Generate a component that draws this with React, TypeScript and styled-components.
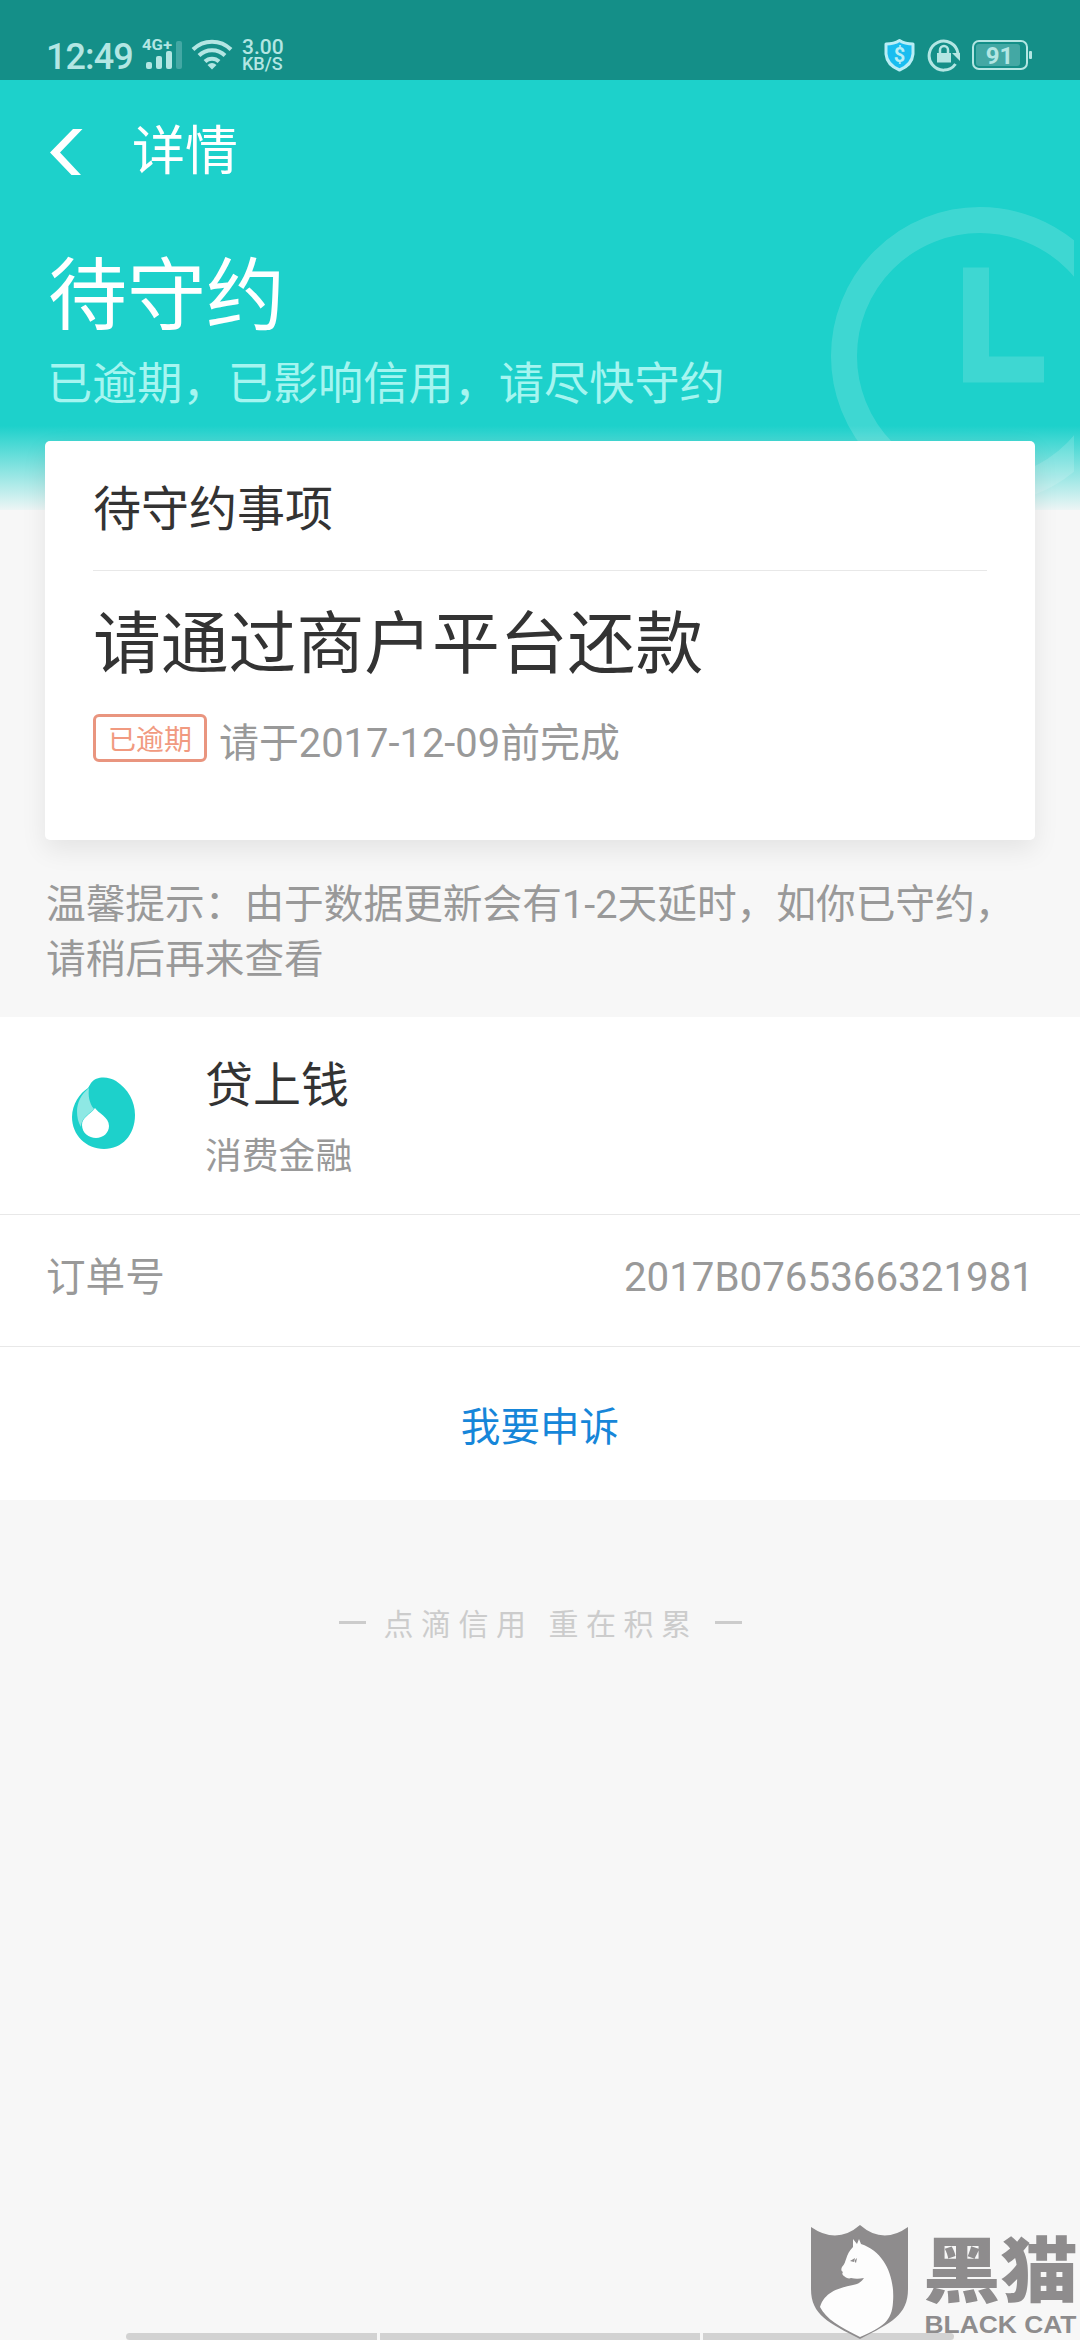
import React from "react";
import styled, { createGlobalStyle } from "styled-components";

const GlobalStyle = createGlobalStyle`
  * { box-sizing: border-box; }
  html, body { margin: 0; padding: 0; background: #f7f7f7; }
  body { font-family: Roboto, "Noto Sans CJK SC", sans-serif; color: #333; }
`;

const Page = styled.div`
  position: relative;
  display: flex;
  flex-direction: column;
  width: 1080px;
  height: 2340px;
  overflow: hidden;
  background: #f7f7f7;
`;

const StatusBar = styled.div`
  display: flex;
  align-items: flex-start;
  height: 80px;
  padding: 36px 47px 0 46px;
  background: #148f88;
  color: #b3e6e3;
`;

const Clock = styled.span`
  width: 95px;
  padding-top: 1px;
  font-size: 36px;
  font-weight: 500;
  letter-spacing: -0.9px;
  line-height: 40px;
  white-space: nowrap;
`;

const NetSpeed = styled.div`
  display: flex;
  flex-direction: column;
  flex: 1;
  margin-left: 9px;
  padding-top: 1px;
  font-weight: 500;
  white-space: nowrap;
`;

const SpeedValue = styled.span`
  font-size: 21px;
  line-height: 20px;
`;

const SpeedUnit = styled.span`
  font-size: 18px;
  line-height: 14px;
`;

const StatusIcons = styled.div`
  display: flex;
  align-items: flex-start;
  gap: 12px;
  padding-top: 2px;
`;

const Hero = styled.header`
  position: relative;
  display: flex;
  flex-direction: column;
  height: 430px;
  background: linear-gradient(#1dd1cb 0, #1dd1cb 346px, #f7f7f7 434px);
`;

const ClockMark = styled.svg`
  position: absolute;
  left: 831px;
  top: 127px;
`;

const NavBar = styled.nav`
  display: flex;
  align-items: center;
  gap: 48px;
  height: 144px;
  padding-left: 50px;
`;

const NavTitle = styled.h1`
  margin: 0;
  color: #fff;
  font-size: 53px;
  font-weight: 400;
  line-height: 60px;
`;

const StatusTitle = styled.h2`
  margin: 18px 0 0 48px;
  color: #fff;
  font-size: 79px;
  font-weight: 400;
  line-height: 110px;
`;

const StatusNote = styled.p`
  margin: 3px 0 0 47px;
  color: #a5f5f0;
  font-size: 45.2px;
  line-height: 60px;
`;

const Card = styled.section`
  position: relative;
  display: flex;
  flex-direction: column;
  width: 990px;
  height: 399px;
  margin: -69px 45px 0;
  padding: 0 48px;
  border-radius: 5px;
  background: #fff;
  box-shadow: 0 10px 26px rgba(0, 0, 0, 0.08);
`;

const CardHeading = styled.h3`
  height: 130px;
  margin: 0;
  padding-top: 39px;
  border-bottom: 1px solid #e8e8e8;
  font-size: 48px;
  font-weight: 400;
  line-height: 60px;
`;

const CardTitle = styled.p`
  margin: 34px 0 0;
  font-size: 67.8px;
  line-height: 80px;
`;

const DueRow = styled.div`
  display: flex;
  align-items: flex-start;
  gap: 12px;
  margin-top: 29px;
`;

const OverdueTag = styled.span`
  width: 114px;
  height: 48px;
  padding-top: 2px;
  border: 3px solid #e9957f;
  border-radius: 6px;
  color: #f19a80;
  font-size: 28px;
  line-height: 44px;
  text-align: center;
`;

const DueText = styled.span`
  color: #999;
  font-size: 39.9px;
  line-height: 60px;
`;

const Hint = styled.p`
  margin: 37px 40px 0 46px;
  height: 140px;
  color: #999;
  font-size: 39.7px;
  line-height: 55px;
`;

const Panel = styled.section`
  display: flex;
  flex-direction: column;
  height: 483px;
  background: #fff;
`;

const MerchantRow = styled.div`
  display: flex;
  height: 198px;
  padding-left: 72px;
  border-bottom: 1px solid #e8e8e8;
`;

const DropLogo = styled.svg`
  margin-top: 60px;
  flex: none;
`;

const MerchantText = styled.div`
  display: flex;
  flex-direction: column;
  margin: 39px 0 0 69px;
`;

const MerchantName = styled.span`
  font-size: 48px;
  line-height: 60px;
`;

const MerchantKind = styled.span`
  margin-top: 18px;
  color: #999;
  font-size: 36.8px;
  line-height: 46px;
`;

const OrderRow = styled.div`
  display: flex;
  justify-content: space-between;
  height: 132px;
  padding: 33px 46px 0 46px;
  border-bottom: 1px solid #e8e8e8;
  color: #999;
  font-size: 39.6px;
  line-height: 60px;
`;

const OrderNumber = styled.span`
  font-size: 40.3px;
`;

const AppealLink = styled.a`
  padding-top: 51px;
  color: #1686d9;
  font-size: 39.6px;
  line-height: 60px;
  text-align: center;
`;

const Slogan = styled.footer`
  display: flex;
  justify-content: center;
  align-items: center;
  gap: 18px;
  margin-top: 95px;
  padding-left: 1px;
  color: #ccc;
  font-size: 30px;
  line-height: 60px;
`;

const SloganText = styled.span`
  letter-spacing: 7.5px;
  margin-right: -1px;
`;

const Dash = styled.i`
  width: 27px;
  height: 3px;
  margin-top: -5px;
  background: #ccc;
`;

const GestureBar = styled.div`
  position: absolute;
  left: 126px;
  bottom: 0;
  display: grid;
  grid-template-columns: 251px 320px 251px;
  gap: 3px;
  height: 7px;
`;

const GestureSegment = styled.span<{ $side?: "left" | "right" }>`
  background: #d2d2d2;
  border-radius: ${(p) => (p.$side === "left" ? "4px 0 0 4px" : p.$side === "right" ? "0 4px 4px 0" : "0")};
`;

const Watermark = styled.svg`
  position: absolute;
  left: 800px;
  top: 2215px;
  overflow: visible;
`;

export default function App() {
  return (
    <>
      <GlobalStyle />
      <Page>
        <StatusBar>
          <Clock>12:49</Clock>
          <svg width="92" height="34" viewBox="0 0 92 34" fill="currentColor">
            <text x="1" y="14" fontSize="14" fontWeight="700" textLength="30" lengthAdjust="spacingAndGlyphs">4G+</text>
            <rect x="5" y="26" width="6" height="7" rx="2" />
            <rect x="15" y="20" width="6" height="13" rx="2" />
            <rect x="25" y="15" width="6" height="18" rx="2" />
            <rect x="35" y="5" width="6" height="28" rx="2" opacity="0.3" />
            <g fill="none" stroke="currentColor" strokeWidth="4">
              <path d="M52 13.500a27 27 0 0 1 38 0" />
              <path d="M58 19.500a18.500 18.500 0 0 1 26 0" />
              <path d="M64 25.500a10 10 0 0 1 14 0" />
            </g>
            <path d="M66.500 29q4.500-4 9 0l-4.500 4.500z" />
          </svg>
          <NetSpeed>
            <SpeedValue>3.00</SpeedValue>
            <SpeedUnit>KB/S</SpeedUnit>
          </NetSpeed>
          <StatusIcons>
            <svg width="33" height="34" viewBox="0 0 33 34">
              <path d="M17.500 2.500Q23 6 31 6v10q-1 11-13.500 16Q5 27 4 16V6q8 0 13.500-3.500z" fill="#19bdf0" stroke="#b9eef6" strokeWidth="3" strokeLinejoin="round" />
              <text x="17.500" y="24" fontSize="20" fontWeight="700" fill="#b9eef6" textAnchor="middle">$</text>
            </svg>
            <svg width="33" height="34" viewBox="0 0 33 34" fill="currentColor">
              <path d="M31 15.500A14.500 14.500 0 1 0 28.500 26" fill="none" stroke="currentColor" strokeWidth="3" />
              <path d="M25 15h8v8z" />
              <rect x="10" y="15" width="14" height="9.500" />
              <path d="M13 16v-4a4 4 0 0 1 8 0v4" fill="none" stroke="currentColor" strokeWidth="2.500" />
            </svg>
            <svg width="61" height="34" viewBox="0 0 61 34" fill="currentColor">
              <rect x="1" y="3" width="54" height="28" rx="6" fill="none" stroke="currentColor" strokeWidth="2" />
              <rect x="4" y="6" width="44" height="22" rx="3" opacity="0.3" />
              <rect x="57" y="13" width="3" height="8" rx="1" />
              <text x="27.500" y="25.500" fontSize="24" fontWeight="700" textAnchor="middle">91</text>
            </svg>
          </StatusIcons>
        </StatusBar>

        <Hero>
          <ClockMark width="243" height="303" viewBox="0 0 243 303" fill="none" stroke="#fff" strokeOpacity="0.15" strokeWidth="26">
            <circle cx="149" cy="149" r="136" />
            <path d="M145 61v102h68" transform="translate(0 -0.500)" />
          </ClockMark>
          <NavBar>
            <svg width="34" height="48" viewBox="0 0 34 48">
              <path d="M23 1h9.500L10 24.500 31 47H21.500L0 24.500z" fill="#fff" />
            </svg>
            <NavTitle>详情</NavTitle>
          </NavBar>
          <StatusTitle>待守约</StatusTitle>
          <StatusNote>已逾期，已影响信用，请尽快守约</StatusNote>
        </Hero>

        <Card>
          <CardHeading>待守约事项</CardHeading>
          <CardTitle>请通过商户平台还款</CardTitle>
          <DueRow>
            <OverdueTag>已逾期</OverdueTag>
            <DueText>请于2017-12-09前完成</DueText>
          </DueRow>
        </Card>

        <Hint>
          温馨提示：由于数据更新会有1-2天延时，如你已守约，
          <br />
          请稍后再来查看
        </Hint>

        <Panel>
          <MerchantRow>
            <DropLogo width="64" height="74" viewBox="0 0 64 74">
              <path d="M19 6C24-1 36-1 44 4c12 8 19 20 19 34 0 20-13 34-31 34S0 58 0 40C0 27 8 16 16 11z" fill="#1dd1cb" />
              <path d="M17 11C9 17 5 26 5 34c0 6 1 11 4 16 0-9 7-12 13-18C17 26 16 18 17 11z" fill="#8ee8e4" />
              <path d="M23 31c3 5 14 9 14 18 0 7-6 12-13 12S10 56 10 48c0-8 8-10 13-17z" fill="#fff" />
            </DropLogo>
            <MerchantText>
              <MerchantName>贷上钱</MerchantName>
              <MerchantKind>消费金融</MerchantKind>
            </MerchantText>
          </MerchantRow>
          <OrderRow>
            <span>订单号</span>
            <OrderNumber>2017B0765366321981</OrderNumber>
          </OrderRow>
          <AppealLink>我要申诉</AppealLink>
        </Panel>

        <Slogan>
          <Dash />
          <SloganText>点滴信用 重在积累</SloganText>
          <Dash />
        </Slogan>

        <GestureBar>
          <GestureSegment $side="left" />
          <GestureSegment />
          <GestureSegment $side="right" />
        </GestureBar>

        <Watermark width="280" height="125" viewBox="0 0 280 125" fill="#8e8c8d">
          <path d="M11 12q26 18 49-2 23 20 48 2v62c0 26-17 34-48 50C29 108 11 100 11 74z" />
          <path d="M53 24l4 5 2-5 2 5c24 8 34 33 32 58-1 19-10 25-33 35-20-10-34-18-40-30 5-16 20-19 33-22 6-1 9-4 11-7-5 1-9 1-13 0-2 1-5 0-7-2-2-1-2-3-1-4-2-1-2-3-1-5 5-5 3-12 11-20z" fill="#fdfdfd" />
          <path d="M50 46l5-3-1 4zM57 43l-1 5q-3-2 1-5z" />
          <text x="123" y="80.500" fontFamily="Noto Sans CJK SC, sans-serif" fontWeight="900" fontSize="71" textLength="155" lengthAdjust="spacingAndGlyphs">黑猫</text>
          <text x="124.500" y="117.500" fontFamily="Liberation Sans, sans-serif" fontWeight="700" fontSize="23.500" textLength="152" lengthAdjust="spacingAndGlyphs">BLACK CAT</text>
        </Watermark>
      </Page>
    </>
  );
}
